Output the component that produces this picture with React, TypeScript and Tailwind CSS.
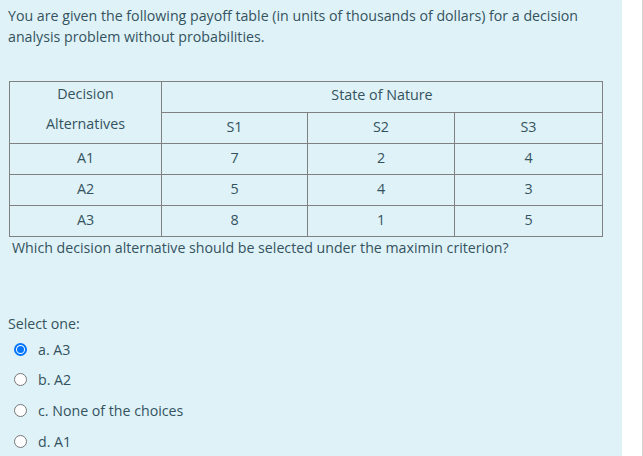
import React from "react";

const rows = [
  ["A1", "7", "2", "4"],
  ["A2", "5", "4", "3"],
  ["A3", "8", "1", "5"],
];

function Radio({ checked }: { checked?: boolean }) {
  return checked ? (
    <span className="w-[13px] h-[13px] rounded-full border-[2px] border-[#0075ff] bg-white flex items-center justify-center">
      <span className="w-[7px] h-[7px] rounded-full bg-[#0075ff]" />
    </span>
  ) : (
    <span className="w-[13px] h-[13px] rounded-full border border-[#767676] bg-white" />
  );
}

export default function App() {
  const opts = [
    { label: "a. A3", checked: true },
    { label: "b. A2" },
    { label: "c. None of the choices" },
    { label: "d. A1" },
  ];
  return (
    <div
      className="w-[643px] h-[456px] flex bg-white overflow-hidden"
      style={{ fontFamily: '"Open Sans", "Noto Sans", sans-serif' }}
    >
      <div className="w-[622px] h-full bg-[#def2f8] text-[#35525e] text-[14.2px] leading-[21px] pl-[8px] pt-[5px]">
        <p className="w-[600px]">
          You are given the following payoff table (in units of thousands of dollars) for a decision analysis problem
          without probabilities.
        </p>
        <table className="mt-[34px] ml-[1px] border-collapse border border-[#333] text-[14.3px]">
          <tbody>
            <tr className="h-[31px]">
              <td rowSpan={2} className="w-[152px] border border-[#808080] text-center align-top leading-[30px]">
                <div className="-translate-y-[3px]">
                  Decision
                  <br />
                  Alternatives
                </div>
              </td>
              <td colSpan={3} className="border border-[#808080] text-center pb-[5px]">
                State of Nature
              </td>
            </tr>
            <tr className="h-[31px]">
              <td className="w-[146px] border border-[#808080] text-center pb-[3px]">S1</td>
              <td className="w-[147px] border border-[#808080] text-center pb-[3px]">S2</td>
              <td className="w-[148px] border border-[#808080] text-center pb-[3px]">S3</td>
            </tr>
            {rows.map((r) => (
              <tr key={r[0]} className="h-[31px]">
                {r.map((c, i) => (
                  <td key={i} className="border border-[#808080] text-center pb-[3px]">
                    {c}
                  </td>
                ))}
              </tr>
            ))}
          </tbody>
        </table>
        <p className="pl-[4px] leading-[22px]">Which decision alternative should be selected under the maximin criterion?</p>
        <div className="mt-[54px]">Select one:</div>
        <div className="flex flex-col">
          {opts.map((o) => (
            <div key={o.label} className="flex items-center h-[30.6px] pl-[6px] gap-[11px]">
              <Radio checked={o.checked} />
              <span>{o.label}</span>
            </div>
          ))}
        </div>
      </div>
      <div className="w-[20px]" />
      <div className="w-[1px] h-full bg-[#d0d0d0]" />
    </div>
  );
}
